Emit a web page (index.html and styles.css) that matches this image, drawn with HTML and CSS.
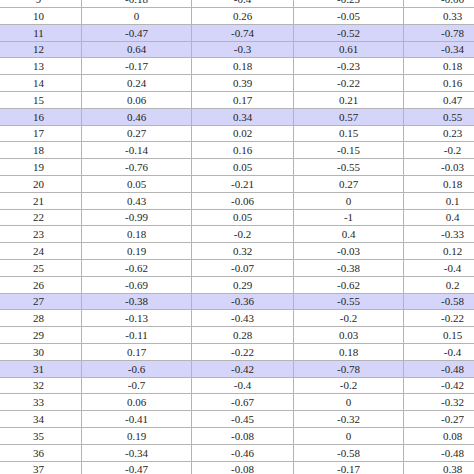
FILE: index.html
```html
<!DOCTYPE html>
<html>
<head>
<meta charset="utf-8">
<link rel="stylesheet" href="styles.css">
</head>
<body>
<table class="data">
<colgroup><col class="c1"><col class="c2"><col class="c3"><col class="c4"><col class="c5"></colgroup>
<tbody>
<tr><td>9</td><td>-0.18</td><td>-0.4</td><td>-0.25</td><td>-0.06</td></tr>
<tr><td>10</td><td>0</td><td>0.26</td><td>-0.05</td><td>0.33</td></tr>
<tr class="hl"><td>11</td><td>-0.47</td><td>-0.74</td><td>-0.52</td><td>-0.78</td></tr>
<tr class="hl"><td>12</td><td>0.64</td><td>-0.3</td><td>0.61</td><td>-0.34</td></tr>
<tr><td>13</td><td>-0.17</td><td>0.18</td><td>-0.23</td><td>0.18</td></tr>
<tr><td>14</td><td>0.24</td><td>0.39</td><td>-0.22</td><td>0.16</td></tr>
<tr><td>15</td><td>0.06</td><td>0.17</td><td>0.21</td><td>0.47</td></tr>
<tr class="hl"><td>16</td><td>0.46</td><td>0.34</td><td>0.57</td><td>0.55</td></tr>
<tr><td>17</td><td>0.27</td><td>0.02</td><td>0.15</td><td>0.23</td></tr>
<tr><td>18</td><td>-0.14</td><td>0.16</td><td>-0.15</td><td>-0.2</td></tr>
<tr><td>19</td><td>-0.76</td><td>0.05</td><td>-0.55</td><td>-0.03</td></tr>
<tr><td>20</td><td>0.05</td><td>-0.21</td><td>0.27</td><td>0.18</td></tr>
<tr><td>21</td><td>0.43</td><td>-0.06</td><td>0</td><td>0.1</td></tr>
<tr><td>22</td><td>-0.99</td><td>0.05</td><td>-1</td><td>0.4</td></tr>
<tr><td>23</td><td>0.18</td><td>-0.2</td><td>0.4</td><td>-0.33</td></tr>
<tr><td>24</td><td>0.19</td><td>0.32</td><td>-0.03</td><td>0.12</td></tr>
<tr><td>25</td><td>-0.62</td><td>-0.07</td><td>-0.38</td><td>-0.4</td></tr>
<tr><td>26</td><td>-0.69</td><td>0.29</td><td>-0.62</td><td>0.2</td></tr>
<tr class="hl"><td>27</td><td>-0.38</td><td>-0.36</td><td>-0.55</td><td>-0.58</td></tr>
<tr><td>28</td><td>-0.13</td><td>-0.43</td><td>-0.2</td><td>-0.22</td></tr>
<tr><td>29</td><td>-0.11</td><td>0.28</td><td>0.03</td><td>0.15</td></tr>
<tr><td>30</td><td>0.17</td><td>-0.22</td><td>0.18</td><td>-0.4</td></tr>
<tr class="hl"><td>31</td><td>-0.6</td><td>-0.42</td><td>-0.78</td><td>-0.48</td></tr>
<tr><td>32</td><td>-0.7</td><td>-0.4</td><td>-0.2</td><td>-0.42</td></tr>
<tr><td>33</td><td>0.06</td><td>-0.67</td><td>0</td><td>-0.32</td></tr>
<tr><td>34</td><td>-0.41</td><td>-0.45</td><td>-0.32</td><td>-0.27</td></tr>
<tr><td>35</td><td>0.19</td><td>-0.08</td><td>0</td><td>0.08</td></tr>
<tr><td>36</td><td>-0.34</td><td>-0.46</td><td>-0.58</td><td>-0.48</td></tr>
<tr><td>37</td><td>-0.47</td><td>-0.08</td><td>-0.17</td><td>0.38</td></tr>
</tbody>
</table>
</body>
</html>
```
FILE: styles.css
```css
html, body {
  margin: 0;
  padding: 0;
  background: #ffffff;
  overflow: hidden;
  width: 474px;
  height: 474px;
}
.data {
  border-collapse: collapse;
  table-layout: fixed;
  width: 506px;
  margin-left: -5px;
  margin-top: -9.8px;
  font-family: "Liberation Serif", "Times New Roman", serif;
  font-size: 11px;
  color: #1e1e1e;
}
.c1 { width: 86px; }
.c2 { width: 110px; }
.c3 { width: 102px; }
.c4 { width: 110px; }
.c5 { width: 98px; }
.data tr { height: 16.81px; }
.data td {
  border: 1px solid #b4b4b4;
  text-align: center;
  vertical-align: middle;
  padding: 0;
  line-height: 14px;
  white-space: nowrap;
}
.data tr.hl td {
  background: #d5d5fa;
}
```
